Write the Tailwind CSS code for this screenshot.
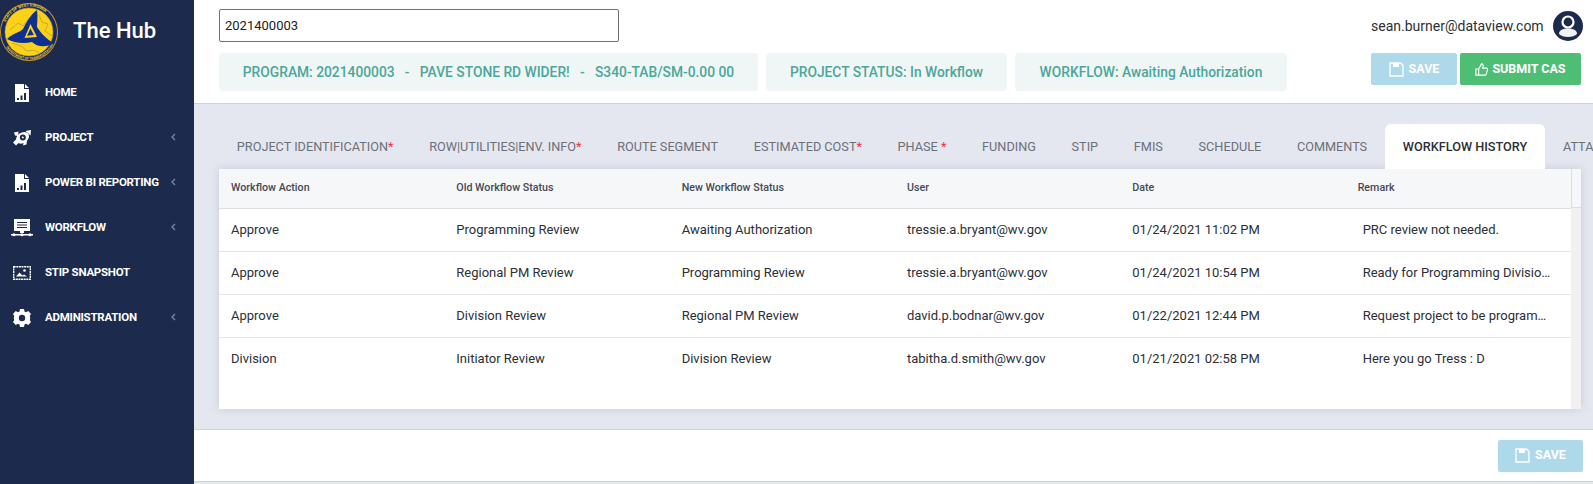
<!DOCTYPE html>
<html lang="en">
<head>
<meta charset="UTF-8" />
<title>The Hub</title>
<script src="https://cdn.jsdelivr.net/npm/@tailwindcss/browser@4"></script>
</head>
<body class="font-['Roboto',sans-serif] bg-[#e4e7ef] text-[#2b2f38] h-[484px] w-[1593px] overflow-hidden flex">
<!-- sidebar -->
<aside class="w-[194px] h-full shrink-0 bg-[#1c2b4d] text-white">
  <div class="h-[70px] flex items-start">
    <svg class="w-[60px] h-[66px] shrink-0" viewBox="0 0 60 66">
      <defs><path id="ringtop" d="M3.500 32a25.500 25.500 0 0 1 51 0"/><path id="ringbot" d="M1.500 32a27.500 27.500 0 0 0 55 0"/></defs>
      <circle cx="29" cy="32" r="29" fill="#c99a1a"/>
      <circle cx="29" cy="32" r="28" fill="#14296b"/>
      <circle cx="29" cy="32" r="24" fill="#fbd21a" stroke="#c99a10" stroke-width=".6"/>
      <text font-family="Roboto" font-size="4" font-weight="700" fill="#e8c93a"><textPath href="#ringtop" startOffset="10">STATE OF WEST VIRGINIA</textPath></text>
      <text font-family="Roboto" font-size="3.400" font-weight="700" fill="#e8c93a"><textPath href="#ringbot" startOffset="16">DEPARTMENT OF TRANSPORTATION</textPath></text>
      <path d="M10 30l8-7 5 3 6-8 4 1M39 15l3 7 6 2-3 7 7 5M12 43l9 3 6 5 8-1 4 3" fill="none" stroke="#8b8642" stroke-width=".5"/>
      <path d="M37 10C38 17 37 23 37 27C41 33 46 39 54 43C46 48 37 47 32 42C24 44 14 43 7 39C13 33 19 33 23 29C26 23 30 15 37 10Z" fill="#10308f"/>
      <path d="M30.500 24L37 37L24.500 38Z" fill="#fbd21a"/>
      <path d="M30.500 28.500L33.800 35L27 35.700Z" fill="#10308f"/>
    </svg>
    <span class="ml-[13px] mt-[19px] text-[22px] leading-[24px] font-medium">The Hub</span>
  </div>
  <nav class="text-[11.500px] font-bold tracking-[-0.25px]">
    <a class="h-[45px] flex items-center">
      <svg class="w-[14px] h-[18px] ml-[15px]" viewBox="0 0 14 18"><path fill="#fff" d="M0 0h9v5h5v13H0z"/><path fill="#fff" d="M10 0l4 4h-4z"/><path fill="#1c2b4d" d="M2 14h2v2H2zM5.500 11.500h2V16h-2zM9 9h2v7H9z"/></svg>
      <span class="ml-[16px]">HOME</span>
    </a>
    <a class="h-[45px] flex items-center">
      <svg class="w-[18px] h-[16px] ml-[13px]" viewBox="0 0 18 16"><ellipse cx="9.500" cy="7.800" rx="7" ry="5.200" transform="rotate(-35 9.500 7.800)" fill="#fff"/><path fill="#fff" d="M12.500 1L18 0l-.5 5.500zM1 2.500L5.500 1.500 5 6 2 5.500zM10 15.500l3.500-1L14 10l-3 1zM0 12.500L3 9.500 6 12.500 3 15.500z"/><circle cx="9.800" cy="7.500" r="3" fill="#1c2b4d"/><circle cx="9.800" cy="7.500" r="1" fill="#fff"/></svg>
      <span class="ml-[14px]">PROJECT</span>
      <svg class="w-[6px] h-[8px] ml-auto mr-[18px] mt-[-2px]" viewBox="0 0 6 8"><path d="M5 1L2 4l3 3" fill="none" stroke="#7d879c" stroke-width="1.300"/></svg>
    </a>
    <a class="h-[45px] flex items-center">
      <svg class="w-[14px] h-[18px] ml-[15px]" viewBox="0 0 14 18"><path fill="#fff" d="M0 0h9v5h5v13H0z"/><path fill="#fff" d="M10 0l4 4h-4z"/><path fill="#1c2b4d" d="M2 14h2v2H2zM5.500 11.500h2V16h-2zM9 9h2v7H9z"/></svg>
      <span class="ml-[16px]">POWER BI REPORTING</span>
      <svg class="w-[6px] h-[8px] ml-auto mr-[18px] mt-[-2px]" viewBox="0 0 6 8"><path d="M5 1L2 4l3 3" fill="none" stroke="#7d879c" stroke-width="1.300"/></svg>
    </a>
    <a class="h-[45px] flex items-center">
      <svg class="w-[22px] h-[18px] ml-[11px]" viewBox="0 0 22 18"><path fill="#fff" d="M3 0h16v12H3zM9 12h4v2H9zM0 15h22v1.500H0z"/><path fill="#1c2b4d" d="M6 3h10v1H6zM6 5.500h10v1H6zM6 8h10v1H6z"/><circle cx="3" cy="15.700" r="1.500" fill="#fff"/><circle cx="11" cy="15.700" r="1.500" fill="#fff"/><circle cx="19" cy="15.700" r="1.500" fill="#fff"/></svg>
      <span class="ml-[12px]">WORKFLOW</span>
      <svg class="w-[6px] h-[8px] ml-auto mr-[18px] mt-[-2px]" viewBox="0 0 6 8"><path d="M5 1L2 4l3 3" fill="none" stroke="#7d879c" stroke-width="1.300"/></svg>
    </a>
    <a class="h-[45px] flex items-center">
      <svg class="w-[18px] h-[14px] ml-[13px]" viewBox="0 0 18 14"><rect x=".7" y=".7" width="16.600" height="12.600" fill="none" stroke="#fff" stroke-width="1.400" stroke-dasharray="2 .6"/><circle cx="11.500" cy="4.500" r="1.300" fill="#fff"/><path fill="#fff" d="M3 10.500l3.500-4 3 3 1.500-1 3 2z"/></svg>
      <span class="ml-[14px]">STIP SNAPSHOT</span>
    </a>
    <a class="h-[45px] flex items-center">
      <svg class="w-[18px] h-[18px] ml-[13px]" viewBox="0 0 18 18"><path fill="#fff" d="M7 0h4l.5 2.500 1.500.7L15.300 2 18 5l-1.300 2 .4 1v2l-.4 1 1.300 2-2.700 3-2.300-1.200-1.500.7L11 18H7l-.5-2.500-1.500-.7L2.700 16 0 13l1.300-2-.4-1V8l.4-1L0 5l2.700-3L5 3.200l1.500-.7z"/><circle cx="9" cy="9" r="3.200" fill="#1c2b4d"/></svg>
      <span class="ml-[14px]">ADMINISTRATION</span>
      <svg class="w-[6px] h-[8px] ml-auto mr-[18px] mt-[-2px]" viewBox="0 0 6 8"><path d="M5 1L2 4l3 3" fill="none" stroke="#7d879c" stroke-width="1.300"/></svg>
    </a>
  </nav>
</aside>

<main class="w-[1399px] h-full flex flex-col">
  <!-- top bar -->
  <header class="h-[104px] bg-white border-b border-[#cfd2da] shrink-0 flex justify-between pl-[25px] pr-[10px]">
    <div>
      <input value="2021400003" class="block mt-[9px] w-[400px] h-[33px] border border-[#6f7178] rounded-[2px] px-[5px] text-[13px] text-[#222]" />
      <div class="flex gap-[8px] mt-[11px] text-[13.800px] font-medium text-[#4aa79a]">
        <div class="w-[539px] h-[38px] bg-[#f0f6f6] rounded-[4px] flex items-center justify-center whitespace-pre">PROGRAM: 2021400003   -   PAVE STONE RD WIDER!   -   S340-TAB/SM-0.00 00</div>
        <div class="w-[241px] h-[38px] bg-[#f0f6f6] rounded-[4px] flex items-center justify-center">PROJECT STATUS: In Workflow</div>
        <div class="w-[272px] h-[38px] bg-[#f0f6f6] rounded-[4px] flex items-center justify-center">WORKFLOW: Awaiting Authorization</div>
      </div>
    </div>
    <div class="w-[212px]">
      <div class="flex items-center h-[30px] mt-[11px]">
        <span class="text-[14px] text-[#2b2f38]">sean.burner@dataview.com</span>
        <svg class="w-[30px] h-[30px] ml-auto" viewBox="0 0 30 30"><circle cx="15" cy="15" r="15" fill="#1c2b4d"/><circle cx="15" cy="11" r="5.500" fill="none" stroke="#fff" stroke-width="2.200"/><path d="M6 23c0-4 4-5.500 9-5.500s9 1.500 9 5.500c-2 2-5 3-9 3s-7-1-9-3z" fill="#f0f1f4"/></svg>
      </div>
      <div class="flex gap-[3px] mt-[12px] text-[12.500px] font-bold text-white">
        <button class="w-[86px] h-[32px] bg-[#aed9ea] rounded-[2px] flex items-center justify-center gap-[5px]">
          <svg class="w-[15px] h-[15px]" viewBox="0 0 15 15"><path d="M1 1h10.500L14 3.500V14H1z" fill="none" stroke="#fff" stroke-width="1.300"/><path d="M4 1h6v4H4z" fill="#fff"/></svg>SAVE
        </button>
        <button class="w-[121px] h-[32px] bg-[#4fbe75] rounded-[2px] flex items-center justify-center gap-[4px]">
          <svg class="w-[13px] h-[13px]" viewBox="0 0 14 14"><path d="M1 6.500h3V13H1zM4 6.500L7 1c1.500 0 2 1 1.700 2.500L8.300 5.500H12.500c1 0 1.300 1 1 1.800l-1.500 5c-.2.500-.6.700-1 .7H4" fill="none" stroke="#fff" stroke-width="1.200"/></svg>SUBMIT CAS
        </button>
      </div>
    </div>
  </header>

  <!-- tabs + table -->
  <section class="flex-1 pl-[25px] pr-[12px] pt-[20px] overflow-hidden">
    <div class="flex h-[45px] text-[12.700px] leading-[18px] text-[#6c7078] whitespace-nowrap overflow-hidden w-[1374px]">
      <span class="px-[17.850px] pt-[14px]">PROJECT IDENTIFICATION<span class="text-[#f0323c]">*</span></span>
      <span class="px-[17.850px] pt-[14px]">ROW|UTILITIES|ENV. INFO<span class="text-[#f0323c]">*</span></span>
      <span class="px-[17.850px] pt-[14px]">ROUTE SEGMENT</span>
      <span class="px-[17.850px] pt-[14px]">ESTIMATED COST<span class="text-[#f0323c]">*</span></span>
      <span class="px-[17.850px] pt-[14px]">PHASE <span class="text-[#f0323c]">*</span></span>
      <span class="px-[17.850px] pt-[14px]">FUNDING</span>
      <span class="px-[17.850px] pt-[14px]">STIP</span>
      <span class="px-[17.850px] pt-[14px]">FMIS</span>
      <span class="px-[17.850px] pt-[14px]">SCHEDULE</span>
      <span class="px-[17.850px] pt-[14px]">COMMENTS</span>
      <span class="px-[17.850px] pt-[14px] bg-white rounded-t-[6px] font-medium text-[#2b2f38]">WORKFLOW HISTORY</span>
      <span class="px-[17.850px] pt-[14px]">ATTACHMENTS</span>
    </div>
    <div class="w-[1362px] h-[240px] bg-white shadow-[0_0_8px_rgba(120,125,145,0.25)] flex">
      <table class="w-[1352px] table-fixed text-[13px] text-[#2b2f38] border-collapse self-start">
        <thead>
          <tr class="h-[39px] bg-[#f6f7f9] border-b border-[#dcdee3] text-[10.700px] font-medium text-left text-[#454a55]">
            <th class="pl-[12px] font-medium">Workflow Action</th>
            <th class="pl-[12px] font-medium">Old Workflow Status</th>
            <th class="pl-[12px] font-medium">New Workflow Status</th>
            <th class="pl-[12px] font-medium">User</th>
            <th class="pl-[12px] font-medium">Date</th>
            <th class="pl-[12px] font-medium">Remark</th>
          </tr>
        </thead>
        <tbody>
          <tr class="h-[43px] border-b border-[#e3e4e8]">
            <td class="pl-[12px]">Approve</td><td class="pl-[12px]">Programming Review</td><td class="pl-[12px]">Awaiting Authorization</td><td class="pl-[12px]">tressie.a.bryant@wv.gov</td><td class="pl-[12px]">01/24/2021 11:02 PM</td><td class="pl-[17px]">PRC review not needed.</td>
          </tr>
          <tr class="h-[43px] border-b border-[#e3e4e8]">
            <td class="pl-[12px]">Approve</td><td class="pl-[12px]">Regional PM Review</td><td class="pl-[12px]">Programming Review</td><td class="pl-[12px]">tressie.a.bryant@wv.gov</td><td class="pl-[12px]">01/24/2021 10:54 PM</td><td class="pl-[17px]"><div class="w-[188px] truncate">Ready for Programming Division review</div></td>
          </tr>
          <tr class="h-[43px] border-b border-[#e3e4e8]">
            <td class="pl-[12px]">Approve</td><td class="pl-[12px]">Division Review</td><td class="pl-[12px]">Regional PM Review</td><td class="pl-[12px]">david.p.bodnar@wv.gov</td><td class="pl-[12px]">01/22/2021 12:44 PM</td><td class="pl-[17px]"><div class="w-[188px] truncate">Request project to be programmed</div></td>
          </tr>
          <tr class="h-[43px]">
            <td class="pl-[12px]">Division</td><td class="pl-[12px]">Initiator Review</td><td class="pl-[12px]">Division Review</td><td class="pl-[12px]">tabitha.d.smith@wv.gov</td><td class="pl-[12px]">01/21/2021 02:58 PM</td><td class="pl-[17px]">Here you go Tress : D</td>
          </tr>
        </tbody>
      </table>
      <div class="w-[10px] h-full bg-[#f1f1f1] flex flex-col">
        <div class="h-[39px] bg-[#f6f7f9] border-l border-b border-[#dcdee3]"></div>
      </div>
    </div>
  </section>

  <!-- bottom bar -->
  <footer class="h-[53px] bg-white border-t border-b border-[#cfd2da] shrink-0 mb-[2px] flex items-center justify-end pr-[10px]">
    <button class="w-[85px] h-[32px] bg-[#aed9ea] rounded-[2px] flex items-center justify-center gap-[5px] text-[12.500px] font-bold text-white">
      <svg class="w-[15px] h-[15px]" viewBox="0 0 15 15"><path d="M1 1h10.500L14 3.500V14H1z" fill="none" stroke="#fff" stroke-width="1.300"/><path d="M4 1h6v4H4z" fill="#fff"/></svg>SAVE
    </button>
  </footer>
</main>
</body>
</html>
